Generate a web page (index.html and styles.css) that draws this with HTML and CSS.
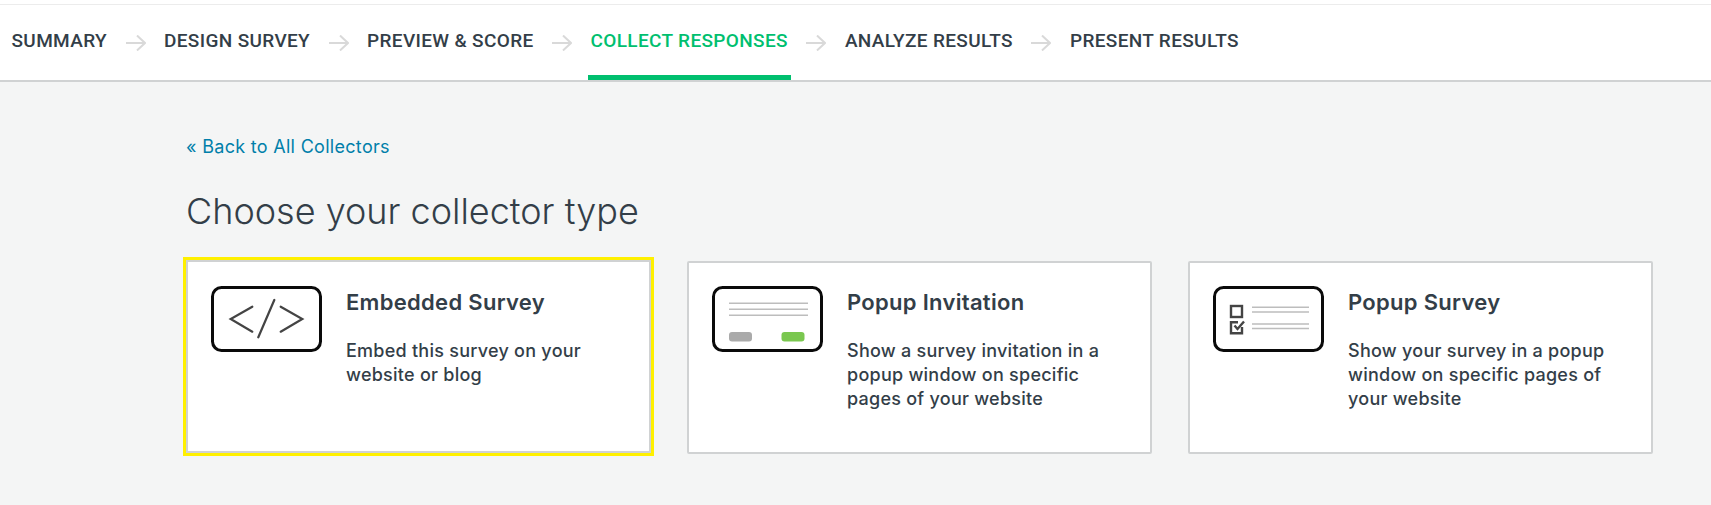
FILE: index.html
```html
<!DOCTYPE html>
<html lang="en">
<head>
<meta charset="utf-8">
<title>Choose your collector type</title>
<link rel="stylesheet" href="styles.css">
</head>
<body>
<div class="topline"></div>
<nav class="steps">
  <a class="step">SUMMARY</a>
  <svg class="arrow" viewBox="0 0 20 16"><path d="M0 8H19M11 .5L19 8L11 15.5"/></svg>
  <a class="step">DESIGN SURVEY</a>
  <svg class="arrow" viewBox="0 0 20 16"><path d="M0 8H19M11 .5L19 8L11 15.5"/></svg>
  <a class="step">PREVIEW &amp; SCORE</a>
  <svg class="arrow" viewBox="0 0 20 16"><path d="M0 8H19M11 .5L19 8L11 15.5"/></svg>
  <a class="step active">COLLECT RESPONSES</a>
  <svg class="arrow" viewBox="0 0 20 16"><path d="M0 8H19M11 .5L19 8L11 15.5"/></svg>
  <a class="step">ANALYZE RESULTS</a>
  <svg class="arrow" viewBox="0 0 20 16"><path d="M0 8H19M11 .5L19 8L11 15.5"/></svg>
  <a class="step">PRESENT RESULTS</a>
</nav>
<main class="content">
  <a class="back">« Back to All Collectors</a>
  <h1 class="heading">Choose your collector type</h1>
  <div class="cards">
    <section class="card focused">
      <svg class="icon" viewBox="0 0 111 66">
        <rect class="frame" x="1.5" y="1.5" width="108" height="63" rx="9"/>
        <path class="code" d="M41.3 20.7L19.7 33L41.3 45.7M63.3 14L47.3 51.3M69.7 20.7L91.3 33L69.7 45.7"/>
      </svg>
      <div class="card-text">
        <h2 class="card-title">Embedded Survey</h2>
        <p class="card-desc">Embed this survey on your<br>website or blog</p>
      </div>
    </section>
    <section class="card">
      <svg class="icon" viewBox="0 0 111 66">
        <rect class="frame" x="1.5" y="1.5" width="108" height="63" rx="9"/>
        <path class="rule" d="M17 17.3H96M17 23.3H96M17 29.3H96"/>
        <rect class="btn-grey" x="17" y="46" width="23" height="9.5" rx="3"/>
        <rect class="btn-green" x="69.5" y="46" width="23" height="9.5" rx="3"/>
      </svg>
      <div class="card-text">
        <h2 class="card-title">Popup Invitation</h2>
        <p class="card-desc">Show a survey invitation in a<br>popup window on specific<br>pages of your website</p>
      </div>
    </section>
    <section class="card">
      <svg class="icon" viewBox="0 0 111 66">
        <rect class="frame" x="1.5" y="1.5" width="108" height="63" rx="9"/>
        <rect class="box" x="18" y="20" width="11" height="11"/>
        <path class="box" d="M29 41V47.3H18V36.3H25"/>
        <path class="box" d="M21.5 39.5L24.5 43L31 35.5"/>
        <path class="rule" d="M39 21.3H96M39 26H96M39 38H96M39 42.5H96"/>
      </svg>
      <div class="card-text">
        <h2 class="card-title">Popup Survey</h2>
        <p class="card-desc">Show your survey in a popup<br>window on specific pages of<br>your website</p>
      </div>
    </section>
  </div>
</main>
</body>
</html>
```

FILE: styles.css
```css
* { box-sizing: border-box; }
html, body { margin: 0; padding: 0; }
body {
  background: #f4f5f5;
  color: #333e48;
  font-family: "Inter", "Liberation Sans", sans-serif;
  height: 505px;
  overflow: hidden;
}
.topline {
  height: 5px;
  background: #fff;
  border-bottom: 1px solid #ececec;
}
.steps {
  display: flex;
  align-items: flex-start;
  height: 77px;
  padding-left: 8.5px;
  background: #fff;
  border-bottom: 2px solid #d0d2d3;
}
.step {
  display: block;
  height: 75px;
  padding: 26px 3px 0;
  border-bottom: 5px solid transparent;
  font-family: "Roboto", sans-serif;
  font-weight: 500;
  font-size: 19px;
  letter-spacing: 0.35px;
  line-height: 20px;
  white-space: nowrap;
}
.step.active {
  color: #00bf6f;
  border-bottom-color: #00bf6f;
}
.arrow {
  flex: none;
  width: 20px;
  height: 16px;
  margin: 30px 15.5px 0;
  fill: none;
  stroke: #d9d9d9;
  stroke-width: 2;
}
.content {
  padding: 54px 58px 0 186px;
}
.back {
  display: block;
  color: #007faa;
  font-size: 18px;
  letter-spacing: 0.3px;
  line-height: 22px;
}
.heading {
  margin: 31px 0 0;
  font-weight: 300;
  font-size: 36px;
  line-height: 44px;
}
.cards {
  display: grid;
  grid-template-columns: repeat(3, 1fr);
  gap: 36px;
  margin-top: 28px;
}
.card {
  display: flex;
  gap: 24px;
  height: 193px;
  padding: 23px;
  background: #fff;
  border: 2px solid #d0d2d3;
  border-radius: 2px;
}
.card.focused {
  margin-top: -1px;
  padding-top: 24px;
  border-radius: 0;
  outline: 3px solid #fff000;
}
.icon {
  flex: none;
  width: 111px;
  height: 66px;
}
.frame { fill: #fff; stroke: #0a0a0a; stroke-width: 3; }
.code { fill: none; stroke: #444; stroke-width: 2.2; stroke-linecap: round; stroke-linejoin: miter; }
.rule { fill: none; stroke: #bdbdbd; stroke-width: 1.5; }
.box { fill: none; stroke: #444; stroke-width: 2.4; }
.btn-grey { fill: #aaa; }
.btn-green { fill: #7ac74f; }
.card-text { padding-top: 4px; }
.card-title {
  margin: 0;
  font-weight: 600;
  font-size: 22px;
  letter-spacing: 0.3px;
  line-height: 24px;
}
.card-desc {
  margin: 25px 0 0;
  font-weight: 500;
  font-size: 18px;
  letter-spacing: 0.25px;
  line-height: 24px;
}
```
